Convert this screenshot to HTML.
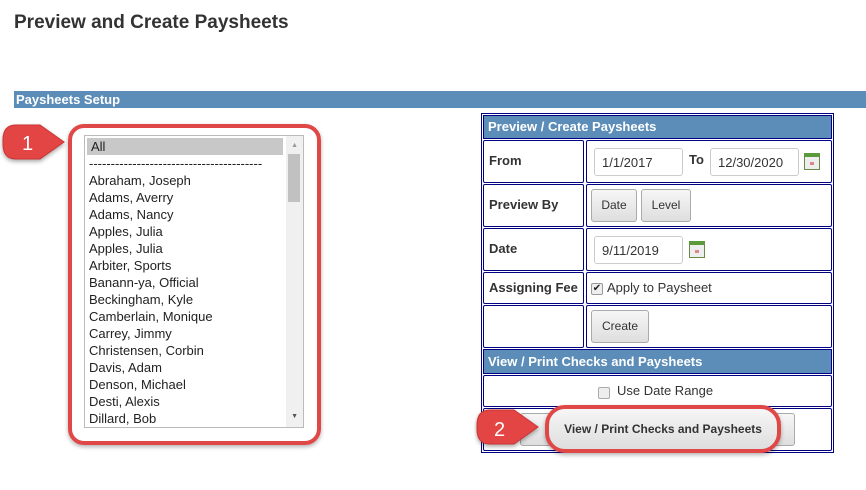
<!DOCTYPE html>
<html><head><style>
*{box-sizing:border-box;margin:0;padding:0}
body{width:866px;height:490px;background:#fff;font-family:"Liberation Sans",Arial,sans-serif;position:relative;overflow:hidden;color:#222}
.a{position:absolute}
.cell{position:absolute;border:1px solid #000080;border-radius:2px;font-size:13px}
.lbl{font-weight:bold;color:#333;padding-left:5px}
.hdr{position:absolute;background:#5b8db8;color:#fff;font-weight:bold;font-size:13px;padding-left:4px;border:1px solid #000080}
.inp{position:absolute;border:1px solid #ccc;border-radius:3px;background:#fff;font-size:13px;padding:6px 0 0 7px;color:#333}
.btn{position:absolute;border:1px solid #aaa;border-radius:3px;background:linear-gradient(#f6f6f6,#dedede);font-size:12px;color:#333;text-align:center}
.cal{position:absolute;width:16px;height:17px;border:1px solid #6a8a4a;background:#eee;border-top:4px solid #5a9a3a}
.cal:after{content:"";position:absolute;left:5px;top:5px;width:4px;height:3px;background:#d88}
.list div{height:17px;line-height:17px;font-size:13px;padding-left:4px}
</style></head><body>
<div class="a" style="left:14px;top:12px;font-size:19px;font-weight:bold;color:#333">Preview and Create Paysheets</div>
<div class="a" style="left:14px;top:91px;width:852px;height:17px;background:#5b8db8;color:#fff;font-weight:bold;font-size:13px;padding-left:2px;line-height:17px">Paysheets Setup</div>

<div class="a" style="left:84px;top:135px;width:220px;height:293px;border:1px solid #bbb;overflow:hidden">
 <div class="list" style="position:absolute;left:0;top:2px;width:200px">
  <div style="background:#c8c8c8;margin:0 2px">All</div>
  <div style="height:17px;overflow:hidden">----------------------------------------</div>
  <div>Abraham, Joseph</div><div>Adams, Averry</div><div>Adams, Nancy</div><div>Apples, Julia</div><div>Apples, Julia</div><div>Arbiter, Sports</div><div>Banann-ya, Official</div><div>Beckingham, Kyle</div><div>Camberlain, Monique</div><div>Carrey, Jimmy</div><div>Christensen, Corbin</div><div>Davis, Adam</div><div>Denson, Michael</div><div>Desti, Alexis</div><div>Dillard, Bob</div><div>Dunbar, Aden</div>
 </div>
 <div class="a" style="right:0;top:0;width:17px;height:291px;background:#f0f0f0"></div>
 <div class="a" style="right:3px;top:18px;width:12px;height:48px;background:#c1c1c1"></div>
 <div class="a" style="right:5px;top:6px;font-size:7px;color:#999">▲</div>
 <div class="a" style="right:5px;top:277px;font-size:7px;color:#555">▼</div>
</div>
<div class="a" style="left:68px;top:124px;width:253px;height:321px;border:4px solid #e04848;border-radius:16px;box-shadow:0 2px 4px rgba(0,0,0,.3)"></div>
<svg class="a" style="left:0;top:122px" width="72" height="44"><path d="M16 3H40L64 20L40 37H16Q3 37 3 22V18Q3 3 16 3Z" fill="#e34545" stroke="#c33" style="filter:drop-shadow(0 2px 2px rgba(0,0,0,.35))"/><text x="22" y="28" fill="#fff" font-size="20" font-family="Liberation Sans">1</text></svg>

<div class="a" style="left:481px;top:113px;width:353px;height:340px;border:1px solid #000080"></div>
<div class="hdr" style="left:483px;top:115px;width:349px;height:24px;line-height:22px">Preview / Create Paysheets</div>
<div class="cell lbl" style="left:483px;top:140px;width:101px;height:43px;line-height:40px">From</div>
<div class="cell" style="left:586px;top:140px;width:246px;height:43px"></div>
<div class="inp" style="left:594px;top:148px;width:89px;height:28px">1/1/2017</div>
<div class="a" style="left:689px;top:152px;font-weight:bold;font-size:13px;color:#333">To</div>
<div class="inp" style="left:710px;top:148px;width:89px;height:28px">12/30/2020</div>
<div class="cal" style="left:804px;top:153px"></div>
<div class="cell lbl" style="left:483px;top:184px;width:101px;height:43px;line-height:40px">Preview By</div>
<div class="cell" style="left:586px;top:184px;width:246px;height:43px"></div>
<div class="btn" style="left:591px;top:189px;width:46px;height:33px;line-height:31px">Date</div>
<div class="btn" style="left:641px;top:189px;width:50px;height:33px;line-height:31px">Level</div>
<div class="cell lbl" style="left:483px;top:228px;width:101px;height:43px;line-height:40px">Date</div>
<div class="cell" style="left:586px;top:228px;width:246px;height:43px"></div>
<div class="inp" style="left:594px;top:236px;width:89px;height:28px">9/11/2019</div>
<div class="cal" style="left:689px;top:241px"></div>
<div class="cell lbl" style="left:483px;top:272px;width:101px;height:32px;line-height:29px">Assigning Fee</div>
<div class="cell" style="left:586px;top:272px;width:246px;height:32px;line-height:29px;padding-left:20px;color:#333">Apply to Paysheet</div>
<div class="a" style="left:591px;top:283px;width:12px;height:12px;border:1px solid #999;border-radius:2px;background:#eee;font-size:10px;line-height:10px;text-align:center">✔</div>
<div class="cell" style="left:483px;top:305px;width:101px;height:43px"></div>
<div class="cell" style="left:586px;top:305px;width:246px;height:43px"></div>
<div class="btn" style="left:591px;top:310px;width:58px;height:33px;line-height:31px">Create</div>
<div class="hdr" style="left:483px;top:349px;width:349px;height:25px;line-height:23px">View / Print Checks and Paysheets</div>
<div class="cell" style="left:483px;top:375px;width:349px;height:32px;line-height:30px;color:#333;padding-left:133px">Use Date Range</div>
<div class="a" style="left:598px;top:387px;width:12px;height:12px;border:1px solid #aaa;border-radius:2px;background:#eee"></div>
<div class="cell" style="left:483px;top:408px;width:349px;height:43px"></div>
<div class="btn" style="left:520px;top:413px;width:275px;height:33px"></div>
<div class="a" style="left:545px;top:405px;width:236px;height:48px;border:4px solid #e04848;border-radius:20px;background:linear-gradient(#f6f6f6,#dedede);box-shadow:0 2px 4px rgba(0,0,0,.3);font-size:12px;font-weight:bold;color:#333;text-align:center;line-height:40px">View / Print Checks and Paysheets</div>
<svg class="a" style="left:474px;top:407px" width="72" height="44"><path d="M16 3H40L64 20L40 37H16Q3 37 3 22V18Q3 3 16 3Z" fill="#e34545" stroke="#c33" style="filter:drop-shadow(0 2px 2px rgba(0,0,0,.35))"/><text x="20" y="29" fill="#fff" font-size="20" font-family="Liberation Sans">2</text></svg>
</body></html>
